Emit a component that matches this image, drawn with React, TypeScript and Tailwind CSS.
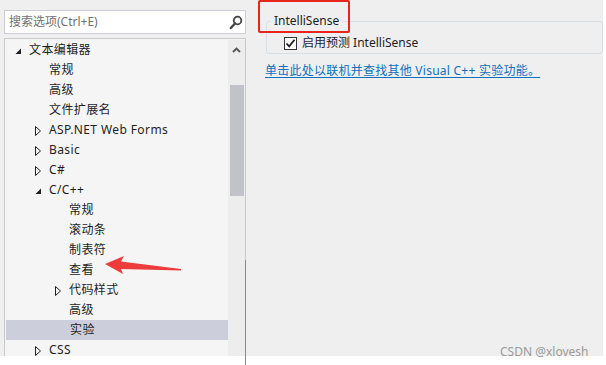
type Row = {
  label: string;
  level: number;
  state?: "open" | "closed";
  selected?: boolean;
};

const rows: Row[] = [
  { label: "文本编辑器", level: 0, state: "open" },
  { label: "常规", level: 1 },
  { label: "高级", level: 1 },
  { label: "文件扩展名", level: 1 },
  { label: "ASP.NET Web Forms", level: 1, state: "closed" },
  { label: "Basic", level: 1, state: "closed" },
  { label: "C#", level: 1, state: "closed" },
  { label: "C/C++", level: 1, state: "open" },
  { label: "常规", level: 2 },
  { label: "滚动条", level: 2 },
  { label: "制表符", level: 2 },
  { label: "查看", level: 2 },
  { label: "代码样式", level: 2, state: "closed" },
  { label: "高级", level: 2 },
  { label: "实验", level: 2, selected: true },
  { label: "CSS", level: 1, state: "closed" },
];

const indent = ["pl-[10px]", "pl-[30px]", "pl-[50px]"];

const font = {
  fontFamily: '"Noto Sans", "Noto Sans CJK SC", sans-serif',
};

function Toggle({ state }: { state?: "open" | "closed" }) {
  if (state === "open") {
    return (
      <svg width="7" height="7" viewBox="0 0 7 7" className="mt-[2px]">
        <polygon points="6,0.5 6,6 0.5,6" fill="#1e1e1e" />
      </svg>
    );
  }
  if (state === "closed") {
    return (
      <svg width="6" height="10" viewBox="0 0 6 10" className="mt-[1px]">
        <polygon
          points="0.5,0.5 5.5,5 0.5,9.5"
          fill="none"
          stroke="#1e1e1e"
          strokeWidth="1"
        />
      </svg>
    );
  }
  return null;
}

function TreeRow({ row }: { row: Row }) {
  return (
    <div
      className={`flex items-center h-[20px] ${indent[row.level]} ${
        row.selected ? "bg-[#cccedb] ml-px" : ""
      }`}
    >
      <span className="w-[14px] flex items-center shrink-0">
        <Toggle state={row.state} />
      </span>
      <span className="text-[12px] text-[#1e1e1e] whitespace-nowrap leading-[16px] tracking-[0.4px]">
        {row.label}
      </span>
    </div>
  );
}

export default function App() {
  return (
    <div className="w-[606px] h-[365px] bg-white relative overflow-hidden" style={font}>
      <div className="w-[603px] h-[356px] bg-[#efefef] flex overflow-hidden">
        {/* left: search + tree */}
        <div className="w-[246px] shrink-0 pl-[4px] pt-[10px]">
          <div className="w-[242px] h-[24px] bg-white border border-[#cccedb] flex items-center pl-[4px] pr-[2px]">
            <span className="flex-1 text-[12px] text-[#717171] leading-[16px]">
              搜索选项(Ctrl+E)
            </span>
            <svg width="14" height="15" viewBox="0 0 14 15">
              <circle cx="8.5" cy="5.5" r="3.8" fill="none" stroke="#444" strokeWidth="1.8" />
              <line x1="6" y1="8.5" x2="1.8" y2="13" stroke="#444" strokeWidth="2.4" strokeLinecap="round" />
            </svg>
          </div>
          <div className="mt-[4px] w-[242px] h-[318px] border border-b-0 border-[#c9c9c9] bg-[#f5f5f5] flex overflow-hidden pt-px">
            <div className="w-[223px] shrink-0">
              {rows.map((r, i) => (
                <TreeRow key={i} row={r} />
              ))}
            </div>
            <div className="w-[17px] shrink-0 bg-[#ededed] flex flex-col items-center">
              <div className="h-[20px] flex items-center justify-center">
                <svg width="9" height="6" viewBox="0 0 9 6">
                  <polyline points="1,5 4.5,1.5 8,5" fill="none" stroke="#555" strokeWidth="1.8" />
                </svg>
              </div>
              <div className="mt-[25px] w-[14px] h-[111px] bg-[#c2c3c9]" />
            </div>
          </div>
        </div>

        {/* right: options page */}
        <div className="flex-1 relative">
          <fieldset className="ml-[20px] mt-[13px] border border-[#d5dfe5] rounded-[3px] pt-[6px] pb-[2px]">
            <legend className="ml-[4px] px-[3px] text-[12px] leading-[16px] text-[#1e1e1e]">
              IntelliSense
            </legend>
            <label className="flex items-center h-[16px] gap-[5px] pl-[17px]">
              <span className="w-[13px] h-[13px] border border-[#333] bg-white flex items-center justify-center">
                <svg width="11" height="11" viewBox="0 0 11 11">
                  <polyline points="1.5,5.5 4.2,8.3 9.5,1.8" fill="none" stroke="#1e1e1e" strokeWidth="1.8" />
                </svg>
              </span>
              <span className="text-[12px] text-[#1e1e1e] leading-[16px]">启用预测 IntelliSense</span>
            </label>
          </fieldset>
          <div className="ml-[19px] mt-[9px] text-[12px] leading-[16px] tracking-[0.25px] text-[#0e70c0] underline underline-offset-[2px] whitespace-nowrap">
            单击此处以联机并查找其他 Visual C++ 实验功能。
          </div>

          {/* red annotation box */}
          <div className="absolute left-[12px] top-0 w-[92px] h-[33px] border-2 border-[#e8241c] rounded-[2px]" />
        </div>
      </div>

      {/* splitter line */}
      <div className="absolute left-[245px] top-[260px] w-px h-[105px] bg-[#8a8a8a]" />

      {/* red arrow annotation */}
      <svg className="absolute left-0 top-0" width="606" height="365" viewBox="0 0 606 365">
        <polygon
          points="105,264 124,256 121,261.5 181,269 181,270.5 121,269 123,274"
          fill="#ee3b3b"
        />
      </svg>

      {/* watermark */}
      <div className="absolute left-[500px] top-[344px] text-[12px] leading-[16px] text-[#9a9a9a] whitespace-nowrap">
        CSDN @xlovesh
      </div>
    </div>
  );
}
